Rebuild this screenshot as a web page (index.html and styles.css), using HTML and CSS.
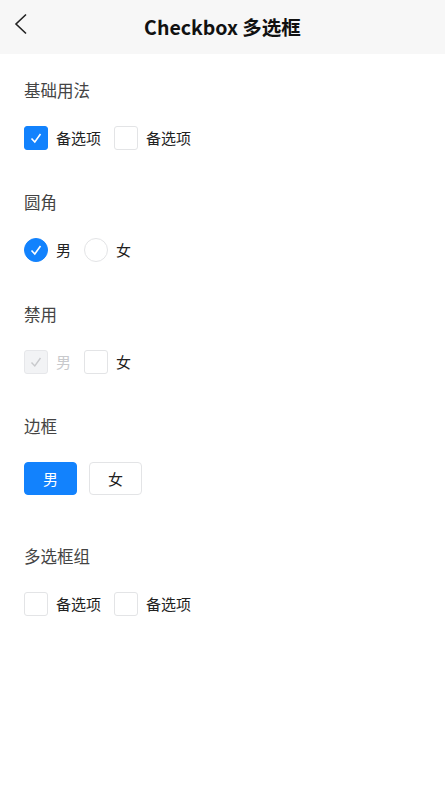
FILE: index.html
```html
<!DOCTYPE html>
<html lang="zh">
<head>
<meta charset="utf-8">
<title>Checkbox 多选框</title>
<link rel="stylesheet" href="styles.css">
</head>
<body>
<header class="nav">
  <span class="back">
    <svg width="16" height="22" viewBox="0 0 16 22"><path d="M13 1.5 L3 11 L13 20.5" fill="none" stroke="#222" stroke-width="1.6"/></svg>
  </span>
  <h1 class="nav-title">Checkbox 多选框</h1>
</header>

<section class="section">
  <div class="title">基础用法</div>
  <div class="row">
    <label class="item"><span class="box checked"><svg viewBox="0 0 24 24"><path d="M7.5 12.5 L10.8 16 L16.5 8" fill="none" stroke="#fff" stroke-width="1.6"/></svg></span><span class="text">备选项</span></label>
    <label class="item"><span class="box"></span><span class="text">备选项</span></label>
  </div>
</section>

<section class="section">
  <div class="title">圆角</div>
  <div class="row">
    <label class="item"><span class="box round checked"><svg viewBox="0 0 24 24"><path d="M7.5 12.5 L10.8 16 L16.5 8" fill="none" stroke="#fff" stroke-width="1.6"/></svg></span><span class="text">男</span></label>
    <label class="item"><span class="box round"></span><span class="text">女</span></label>
  </div>
</section>

<section class="section">
  <div class="title">禁用</div>
  <div class="row">
    <label class="item"><span class="box disabled"><svg viewBox="0 0 24 24"><path d="M7.5 12.5 L10.8 16 L16.5 8" fill="none" stroke="#c8c9cc" stroke-width="1.4"/></svg></span><span class="text text-disabled">男</span></label>
    <label class="item"><span class="box"></span><span class="text">女</span></label>
  </div>
</section>

<section class="section section-border">
  <div class="title">边框</div>
  <div class="row row-buttons">
    <span class="btn btn-on">男</span>
    <span class="btn">女</span>
  </div>
</section>

<section class="section">
  <div class="title">多选框组</div>
  <div class="row">
    <label class="item"><span class="box"></span><span class="text">备选项</span></label>
    <label class="item"><span class="box"></span><span class="text">备选项</span></label>
  </div>
</section>
</body>
</html>
```

FILE: styles.css
```css
* { box-sizing: border-box; }
body {
  margin: 0;
  background: #fff;
  font-family: "Noto Sans CJK SC", "Open Sans", sans-serif;
  color: #333;
}
.nav {
  height: 54px;
  background: #f7f7f7;
  display: flex;
  align-items: center;
  justify-content: center;
  position: relative;
}
.back {
  position: absolute;
  left: 13px;
  top: 13px;
  width: 16px;
  height: 22px;
  display: flex;
}
.nav-title {
  margin: 0;
  font-size: 19.5px;
  font-weight: 700;
  color: #111;
  line-height: 24px;
}
.section {
  padding: 25px 24px 16px;
}
.section-border {
  padding-bottom: 25px;
}
.title {
  font-size: 16.5px;
  line-height: 22px;
  color: #444;
  margin-bottom: 25px;
}
.row {
  display: flex;
  align-items: center;
  gap: 13px;
  height: 24px;
}
.row-buttons {
  height: 33px;
  gap: 12px;
  margin-top: 1px;
}
.item {
  display: flex;
  align-items: center;
  gap: 8px;
}
.box {
  width: 24px;
  height: 24px;
  border: 1px solid #e3e4e6;
  border-radius: 3px;
  background: #fff;
  display: flex;
  align-items: center;
  justify-content: center;
}
.box svg { width: 24px; height: 24px; flex: none; }
.box.checked {
  background: #1282fd;
  border-color: #1282fd;
}
.box.round { border-radius: 50%; }
.box.disabled {
  background: #f2f3f5;
  border-color: #e6e7ea;
}
.text {
  font-size: 15px;
  line-height: 20px;
  color: #222;
}
.text-disabled { color: #c8c9cc; }
.btn {
  width: 53px;
  height: 33px;
  border: 1px solid #e3e4e6;
  border-radius: 4px;
  display: flex;
  align-items: center;
  justify-content: center;
  font-size: 15px;
  color: #222;
  background: #fff;
}
.btn-on {
  background: #1282fd;
  border-color: #1282fd;
  color: #fff;
}
```
